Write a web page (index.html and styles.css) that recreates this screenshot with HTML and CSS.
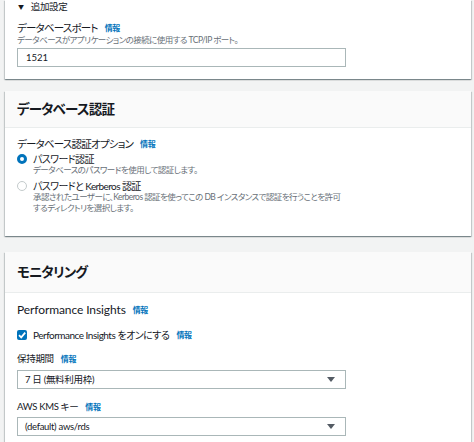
FILE: index.html
```html
<!DOCTYPE html>
<html lang="ja">
<head>
<meta charset="utf-8">
<link rel="stylesheet" href="styles.css">
</head>
<body>
<div class="page">
  <section class="card card-first">
    <div class="body first-body">
      <div class="expander"><span class="caret">▼</span><span>追加設定</span></div>
      <div class="label">データベースポート <a class="info">情報</a></div>
      <div class="desc">データベースがアプリケーションの接続に使用する TCP/IP ポート。</div>
      <div class="input">1521</div>
    </div>
  </section>

  <section class="card card-auth">
    <header class="head"><h2>データベース認証</h2></header>
    <div class="body auth-body">
      <div class="label">データベース認証オプション <a class="info">情報</a></div>
      <div class="radio-row r1">
        <span class="radio on"></span>
        <div class="radio-text">
          <div class="opt">パスワード認証</div>
          <div class="desc">データベースのパスワードを使用して認証します。</div>
        </div>
      </div>
      <div class="radio-row r2">
        <span class="radio"></span>
        <div class="radio-text">
          <div class="opt">パスワードと Kerberos 認証</div>
          <div class="desc">承認されたユーザーに、Kerberos 認証を使ってこの DB インスタンスで認証を行うことを許可</div>
          <div class="desc">するディレクトリを選択します。</div>
        </div>
      </div>
    </div>
  </section>

  <section class="card card-mon">
    <header class="head mon-head"><h2>モニタリング</h2></header>
    <div class="body mon-body">
      <div class="sub">Performance Insights <a class="info">情報</a></div>
      <div class="check-row">
        <span class="check"><svg viewBox="0 0 10 10" width="10" height="10"><path d="M2 5.2 L4.2 7.4 L8.2 2.6" fill="none" stroke="#fff" stroke-width="1.7"/></svg></span>
        <span class="opt">Performance Insights をオンにする</span>
        <a class="info">情報</a>
      </div>
      <div class="label small">保持期間 <a class="info">情報</a></div>
      <div class="select"><span>7 日 (無料利用枠)</span><span class="tri"></span></div>
      <div class="label small kms">AWS KMS キー <a class="info">情報</a></div>
      <div class="select sel2"><span>(default) aws/rds</span><span class="tri"></span></div>
    </div>
  </section>
</div>
</body>
</html>
```

FILE: styles.css
```css
* { box-sizing: border-box; }
html, body { margin: 0; padding: 0; }
body {
  background: #f2f3f3;
  font-family: Lato, "Noto Sans CJK JP", sans-serif;
  font-feature-settings: "palt";
  color: #16191f;
  width: 474px;
  height: 442px;
  overflow: hidden;
}
.page {
  padding: 0 3px 0 5px;
}
.card {
  background: #fff;
  box-shadow: 0 1px 1px 0 rgba(0,28,36,0.3), 1px 1px 1px 0 rgba(0,28,36,0.15), -1px 1px 1px 0 rgba(0,28,36,0.15);
}
.card-first { height: 79px; }
.card-auth { margin-top: 12px; height: 145px; }
.card-mon { margin-top: 16px; height: 200px; }
.body { padding: 0 12px; }
.expander {
  height: 13px;
  font-size: 9.5px;
  letter-spacing: -0.3px;
  line-height: 13px;
  display: flex;
  align-items: center;
  gap: 7px;
  overflow: hidden;
}
.caret { font-size: 6px; margin-left: 1px; line-height: 13px; }
.label {
  display: flex;
  align-items: center;
  height: 14px;
  font-size: 10.5px;
  letter-spacing: -0.8px;
  line-height: 14px;
  white-space: nowrap;
}
.first-body .label { margin-top: 8px; }
.info {
  color: #0073bb;
  font-size: 8px;
  letter-spacing: -0.4px;
  font-weight: 700;
  line-height: 1;
  margin-left: 7px;
}
.desc {
  height: 11px;
  font-size: 8.5px;
  letter-spacing: -0.55px;
  line-height: 11px;
  color: #687078;
  white-space: nowrap;
}
.input {
  margin-top: 2px;
  width: 329px;
  height: 19px;
  border: 1px solid #aab7b8;
  font-size: 9.5px;
  line-height: 17px;
  padding-left: 8px;
}
.head {
  height: 37px;
  background: #fafafa;
  border-bottom: 1px solid #eaeded;
  display: flex;
  align-items: center;
  padding: 0 12px;
}
.mon-head { height: 41px; }
.head h2 {
  margin: 0;
  font-size: 13.5px;
  letter-spacing: -0.8px;
  font-weight: 700;
  line-height: 18px;
}
.auth-body .label { margin-top: 9px; }
.radio-row {
  display: flex;
  align-items: flex-start;
  gap: 6px;
}
.r1 { margin-top: 2px; }
.r2 { margin-top: 4px; }
.radio {
  flex: none;
  width: 10px;
  height: 10px;
  border-radius: 50%;
  border: 1px solid #c4cbcc;
  margin-top: 1px;
}
.radio.on { border: 3px solid #0073bb; }
.opt {
  height: 12px;
  font-size: 10px;
  letter-spacing: -0.6px;
  line-height: 12px;
  white-space: nowrap;
}
.sub {
  display: flex;
  align-items: center;
  height: 16px;
  margin-top: 9px;
  font-size: 12px;
  letter-spacing: -0.1px;
  line-height: 16px;
}
.sub .info { margin-left: 7px; }
.check-row {
  height: 14px;
  margin-top: 10px;
  display: flex;
  align-items: center;
  gap: 6px;
}
.check-row .opt { line-height: 14px; height: 14px; letter-spacing: -0.5px; }
.check-row .info { margin-left: 1px; }
.check {
  flex: none;
  width: 10px;
  height: 10px;
  background: #0073bb;
  border-radius: 2px;
  display: flex;
}
.label.small { font-size: 9.5px; letter-spacing: -0.3px; margin-top: 10px; height: 14px; line-height: 14px; }
.label.small.kms { margin-top: 11px; }
.select {
  margin-top: 4px;
  width: 329px;
  height: 19px;
  border: 1px solid #aab7b8;
  font-size: 9.5px;
  letter-spacing: -0.3px;
  line-height: 17px;
  padding: 0 10px 0 7px;
  display: flex;
  justify-content: space-between;
  align-items: center;
}
.select.sel2 { margin-top: 3px; }
.tri {
  width: 0;
  height: 0;
  border-left: 4px solid transparent;
  border-right: 4px solid transparent;
  border-top: 5px solid #545b64;
}
```
